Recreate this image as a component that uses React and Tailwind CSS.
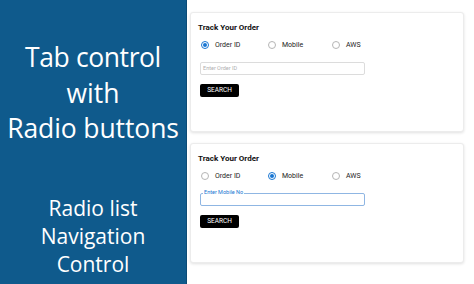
import React from "react";

function Radio({ checked, label, w }) {
  return (
    <div className={`flex items-center ${w}`}>
      <span
        className={`flex h-[8px] w-[8px] items-center justify-center rounded-full border ${
          checked ? "border-[#1976d2]" : "border-[#b5b5b5]"
        }`}
      >
        {checked && <span className="h-[4px] w-[4px] rounded-full bg-[#1976d2]" />}
      </span>
      <span className="ml-[6px] text-[7px] leading-none text-[#222]">{label}</span>
    </div>
  );
}

function Card({ selected, children }) {
  const opts = ["Order ID", "Mobile", "AWS"];
  const widths = ["w-[67px]", "w-[64px]", "w-[40px]"];
  return (
    <div className="h-[120px] w-[274px] rounded-[3px] border border-[#ececec] bg-white px-[7px] pt-[11px] shadow-[0_1px_3px_rgba(0,0,0,0.12)]">
      <div className="text-[8px] font-bold leading-none text-[#111]">Track Your Order</div>
      <div className="mt-[9px] flex pl-[3px]">
        {opts.map((o, i) => (
          <Radio key={o} label={o} checked={selected === i} w={widths[i]} />
        ))}
      </div>
      {children}
    </div>
  );
}

function SearchBtn() {
  return (
    <div className="ml-[2px] flex h-[13px] w-[39px] items-center justify-center rounded-[2px] bg-black text-[6.5px] leading-none text-white">
      SEARCH
    </div>
  );
}

export default function App() {
  return (
    <div
      className="flex h-[284px] w-[474px] overflow-hidden bg-white"
      style={{ fontFamily: "Roboto, 'Liberation Sans', sans-serif" }}
    >
      <div
        className="flex h-full w-[187px] shrink-0 flex-col items-center border-r border-[#0b4a75] bg-[#0f5a8c] text-white"
        style={{ fontFamily: "'Open Sans', 'Noto Sans', sans-serif" }}
      >
        <div className="mt-[40px] text-center text-[26.5px] leading-[35.5px]">
          <div className="tracking-[-0.4px]">Tab control</div>
          <div>with</div>
          <div className="tracking-[-0.1px]">Radio buttons</div>
        </div>
        <div className="mt-[47px] text-center text-[21px] leading-[28px]">
          <div>Radio list</div>
          <div>Navigation</div>
          <div>Control</div>
        </div>
      </div>
      <div className="flex flex-col gap-[11px] pl-[3px] pt-[12px]">
        <Card selected={0}>
          <div className="ml-[2px] mt-[13px] flex h-[13px] w-[165px] items-center rounded-[2px] border border-[#dcdcdc] px-[2px] text-[5.5px] leading-none text-[#b0b0b0]">
            Enter Order ID
          </div>
          <div className="mt-[9px]">
            <SearchBtn />
          </div>
        </Card>
        <Card selected={1}>
          <div className="relative ml-[2px] mt-[13px] h-[13px] w-[165px] rounded-[2px] border border-[#8fb6e3]">
            <span className="absolute left-[2px] top-[-4px] bg-white px-[1px] text-[5.5px] leading-none text-[#1976d2]">
              Enter Mobile No
            </span>
          </div>
          <div className="mt-[9px]">
            <SearchBtn />
          </div>
        </Card>
      </div>
    </div>
  );
}
